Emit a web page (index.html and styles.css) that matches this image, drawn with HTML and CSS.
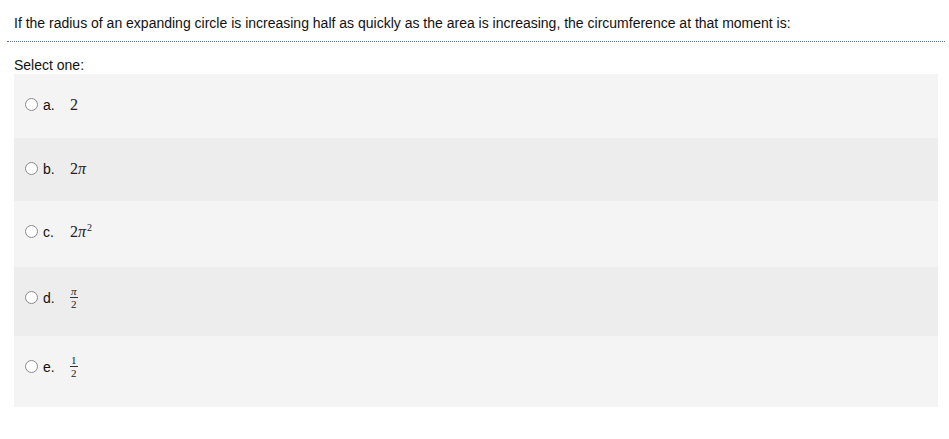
FILE: index.html
```html
<!DOCTYPE html>
<html>
<head>
<meta charset="utf-8">
<link rel="stylesheet" href="styles.css">
</head>
<body>
<div class="que">
  <div class="qtext">If the radius of an expanding circle is increasing half as quickly as the area is increasing, the circumference at that moment is:</div>
  <div class="ablock">
    <div class="prompt">Select one:</div>
    <div class="answer">
      <div class="opt r0"><span class="radio"></span><span class="lbl">a.</span><span class="math">2</span></div>
      <div class="opt r1 short"><span class="radio"></span><span class="lbl">b.</span><span class="math">2<i>π</i></span></div>
      <div class="opt r0 tall1"><span class="radio"></span><span class="lbl">c.</span><span class="math">2<i>π</i><sup>2</sup></span></div>
      <div class="opt r1 tall2"><span class="radio"></span><span class="lbl">d.</span><span class="math"><span class="frac"><span class="num"><i>π</i></span><span class="den">2</span></span></span></div>
      <div class="opt r0 tall3"><span class="radio"></span><span class="lbl">e.</span><span class="math"><span class="frac"><span class="num">1</span><span class="den">2</span></span></span></div>
    </div>
  </div>
</div>
</body>
</html>
```
FILE: styles.css
```css
html, body {
  margin: 0;
  padding: 0;
  background: #fff;
}
body {
  font-family: "Liberation Sans", Arial, sans-serif;
  font-size: 14px;
  color: #111;
}
.que {
  padding: 14px 4px 0 7px;
}
.qtext {
  padding: 0 0 9px 7px;
  line-height: 18px;
  border-bottom: 1px dotted #5b7b8c;
}
.ablock {
  padding: 15px 7px 0 7px;
}
.prompt {
  line-height: 17px;
}
.answer {
  display: flex;
  flex-direction: column;
}
.opt {
  display: flex;
  align-items: center;
  padding: 22px 10px 25px 11px;
  height: 17px;
}
.r0 { background: #f4f4f4; }
.r1 { background: #ededed; }
.short { padding-bottom: 24px; }
.tall1 { padding-bottom: 27px; }
.tall2 { padding-bottom: 30px; }
.tall3 { padding-bottom: 32px; }
.radio {
  width: 11px;
  height: 11px;
  border: 1px solid #8a8a8a;
  border-radius: 50%;
  background: #fff;
  flex: none;
}
.lbl {
  margin-left: 5px;
  width: 27px;
}
.math {
  font-family: "Liberation Serif", "Times New Roman", serif;
  font-size: 16px;
  color: #222;
  display: inline-flex;
  align-items: center;
}
.math i {
  font-style: italic;
}
.math sup {
  font-size: 10px;
  line-height: 0;
  position: relative;
  top: -4px;
  margin-left: 1px;
}
.frac {
  display: inline-flex;
  flex-direction: column;
  align-items: center;
  font-family: "Liberation Serif", "Times New Roman", serif;
  font-size: 11px;
  line-height: 10px;
}
.num {
  border-bottom: 1px solid #333;
  padding: 0 1px 1px;
}
.den {
  padding-top: 1px;
}
```
